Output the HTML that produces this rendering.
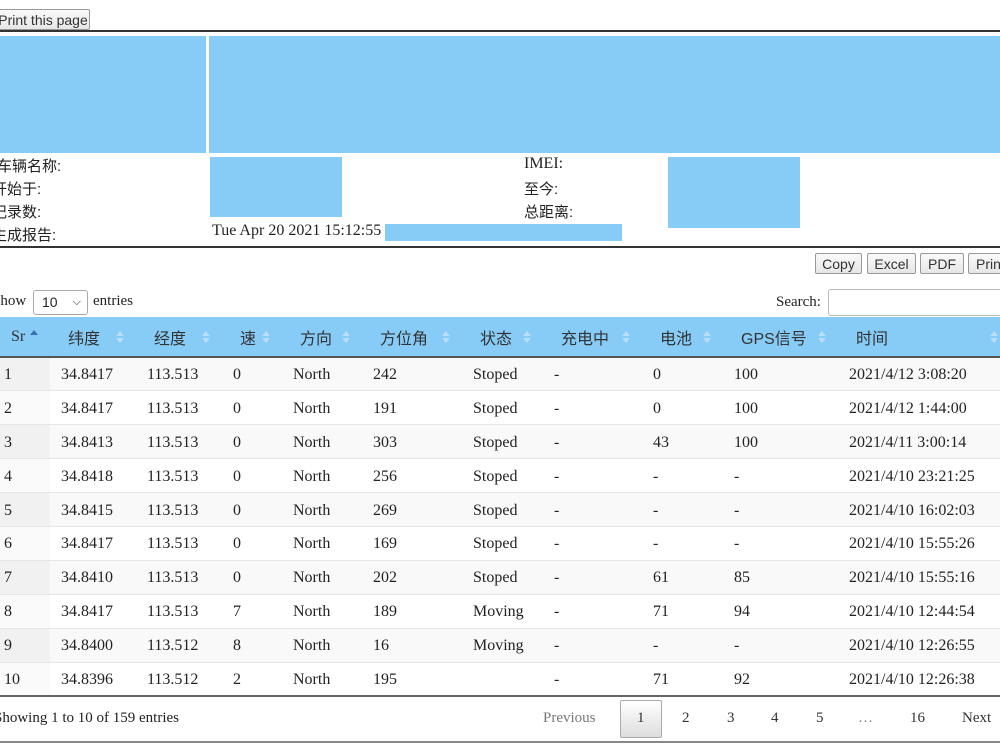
<!DOCTYPE html>
<html><head><meta charset="utf-8">
<style>
*{margin:0;padding:0;box-sizing:border-box}
body{width:1000px;height:750px;overflow:hidden;background:#fff;font-family:"Liberation Serif","Noto Serif CJK SC",serif;color:#222;position:relative}
.a{position:absolute}
.sans{font-family:"Liberation Sans","Noto Sans CJK SC",sans-serif}
.blue{background:#87cbf7}
.btn{position:absolute;border:1px solid #999;border-radius:2px;background:linear-gradient(#fafafa,#e6e6e6);font-family:"Liberation Sans",sans-serif;font-size:14px;color:#333;text-align:center;line-height:20px;height:21px}
.lbl{position:absolute;font-family:"Liberation Sans","Noto Sans CJK SC",sans-serif;font-size:15px;color:#222}
table{position:absolute;left:0;top:317px;border-collapse:collapse;table-layout:fixed;width:1010px}
th{background:#87cbf7;height:40px;font-family:"Liberation Sans","Noto Sans CJK SC",sans-serif;font-weight:normal;font-size:16px;color:#333;text-align:left;padding-left:18px;position:relative;border-bottom:2px solid #555}
th:after{content:"";position:absolute;right:12px;top:14px;width:0;height:0;border-left:4px solid transparent;border-right:4px solid transparent;border-bottom:5px solid #b9def8;}
th:before{content:"";position:absolute;right:12px;top:21px;width:0;height:0;border-left:4px solid transparent;border-right:4px solid transparent;border-top:5px solid #b9def8;}
th.s{font-family:"Liberation Serif",serif}
th.s:after{border-bottom-color:#3b6fb0;top:13px}
th.s:before{display:none}
td{height:33.9px;font-size:16px;padding-left:11px;padding-top:2px;border-top:1px solid #e6e6e6;white-space:nowrap;color:#222}
td:first-child{padding-left:4px}
tr.o td{background:#f9f9f9}
tr.o td:first-child{background:#f1f1f1}
tr.e td{background:#fff}
tr.e td:first-child{background:#fafafa}
.pg{position:absolute;top:710px;font-size:15px;color:#333}
</style></head><body>
<div class="btn" style="left:-4px;top:9px;width:94px">Print this page</div>
<div class="a" style="left:0;top:30px;width:1000px;height:2px;background:#333"></div>
<div class="a blue" style="left:0;top:36px;width:206px;height:117px"></div>
<div class="a blue" style="left:209px;top:36px;width:791px;height:117px"></div>
<div class="lbl" style="left:-3px;top:155px">车辆名称:</div>
<div class="lbl" style="left:-8px;top:178px">开始于:</div>
<div class="lbl" style="left:-8px;top:201px">记录数:</div>
<div class="lbl" style="left:-8px;top:224px">生成报告:</div>
<div class="a blue" style="left:210px;top:157px;width:132px;height:60px"></div>
<div class="a" style="left:212px;top:222px;font-size:16px">Tue Apr 20 2021 15:12:55</div>
<div class="a blue" style="left:385px;top:224px;width:237px;height:17px"></div>
<div class="lbl" style="left:524px;top:155px;font-family:'Liberation Serif',serif;font-size:16px">IMEI:</div>
<div class="lbl" style="left:524px;top:178px">至今:</div>
<div class="lbl" style="left:524px;top:201px">总距离:</div>
<div class="a blue" style="left:668px;top:157px;width:132px;height:71px"></div>
<div class="a" style="left:0;top:246px;width:1000px;height:2px;background:#333"></div>
<div class="btn" style="left:815px;top:253px;width:47px">Copy</div>
<div class="btn" style="left:867px;top:253px;width:49px">Excel</div>
<div class="btn" style="left:920px;top:253px;width:44px">PDF</div>
<div class="btn" style="left:968px;top:253px;width:44px;text-align:left;padding-left:7px">Print</div>
<div class="a" style="left:-8px;top:293px;font-size:15px">Show</div>
<div class="a sans" style="left:33px;top:290px;width:55px;height:25px;border:1px solid #aaa;border-radius:3px;font-size:14px;line-height:23px;padding-left:8px">10<span style="position:absolute;right:6px;top:0;font-size:11px">&#x2335;</span></div>
<div class="a" style="left:93px;top:293px;font-size:15px">entries</div>
<div class="a" style="left:776px;top:294px;font-size:15px">Search:</div>
<div class="a" style="left:828px;top:289px;width:180px;height:27px;border:1px solid #bbb;border-radius:3px"></div>
<table>
<colgroup><col style="width:50px"><col style="width:86px"><col style="width:86px"><col style="width:60px"><col style="width:80px"><col style="width:100px"><col style="width:81px"><col style="width:99px"><col style="width:81px"><col style="width:115px"><col style="width:172px"></colgroup>
<tr><th class="s" style="padding-left:11px">Sr</th><th>纬度</th><th>经度</th><th>速</th><th>方向</th><th>方位角</th><th>状态</th><th>充电中</th><th>电池</th><th>GPS信号</th><th>时间</th></tr>
<tr class="o"><td>1</td><td>34.8417</td><td>113.513</td><td>0</td><td>North</td><td>242</td><td>Stoped</td><td>-</td><td>0</td><td>100</td><td>2021/4/12 3:08:20</td></tr>
<tr class="e"><td>2</td><td>34.8417</td><td>113.513</td><td>0</td><td>North</td><td>191</td><td>Stoped</td><td>-</td><td>0</td><td>100</td><td>2021/4/12 1:44:00</td></tr>
<tr class="o"><td>3</td><td>34.8413</td><td>113.513</td><td>0</td><td>North</td><td>303</td><td>Stoped</td><td>-</td><td>43</td><td>100</td><td>2021/4/11 3:00:14</td></tr>
<tr class="e"><td>4</td><td>34.8418</td><td>113.513</td><td>0</td><td>North</td><td>256</td><td>Stoped</td><td>-</td><td>-</td><td>-</td><td>2021/4/10 23:21:25</td></tr>
<tr class="o"><td>5</td><td>34.8415</td><td>113.513</td><td>0</td><td>North</td><td>269</td><td>Stoped</td><td>-</td><td>-</td><td>-</td><td>2021/4/10 16:02:03</td></tr>
<tr class="e"><td>6</td><td>34.8417</td><td>113.513</td><td>0</td><td>North</td><td>169</td><td>Stoped</td><td>-</td><td>-</td><td>-</td><td>2021/4/10 15:55:26</td></tr>
<tr class="o"><td>7</td><td>34.8410</td><td>113.513</td><td>0</td><td>North</td><td>202</td><td>Stoped</td><td>-</td><td>61</td><td>85</td><td>2021/4/10 15:55:16</td></tr>
<tr class="e"><td>8</td><td>34.8417</td><td>113.513</td><td>7</td><td>North</td><td>189</td><td>Moving</td><td>-</td><td>71</td><td>94</td><td>2021/4/10 12:44:54</td></tr>
<tr class="o"><td>9</td><td>34.8400</td><td>113.512</td><td>8</td><td>North</td><td>16</td><td>Moving</td><td>-</td><td>-</td><td>-</td><td>2021/4/10 12:26:55</td></tr>
<tr class="e"><td>10</td><td>34.8396</td><td>113.512</td><td>2</td><td>North</td><td>195</td><td></td><td>-</td><td>71</td><td>92</td><td>2021/4/10 12:26:38</td></tr>
</table>
<div class="a" style="left:0;top:695px;width:1000px;height:2px;background:#666"></div>
<div class="a" style="left:-6px;top:710px;font-size:15px">Showing 1 to 10 of 159 entries</div>
<div class="pg" style="left:543px;color:#777">Previous</div>
<div class="a" style="left:620px;top:700px;width:42px;height:38px;border:1px solid #aaa;border-radius:2px;background:linear-gradient(#fff,#ddd)"></div>
<div class="pg" style="left:637px">1</div>
<div class="pg" style="left:682px">2</div>
<div class="pg" style="left:727px">3</div>
<div class="pg" style="left:771px">4</div>
<div class="pg" style="left:816px">5</div>
<div class="pg" style="left:858px;color:#888">…</div>
<div class="pg" style="left:910px">16</div>
<div class="pg" style="left:962px">Next</div>
<div class="a" style="left:0;top:741px;width:1000px;height:2px;background:#888"></div>
</body></html>
